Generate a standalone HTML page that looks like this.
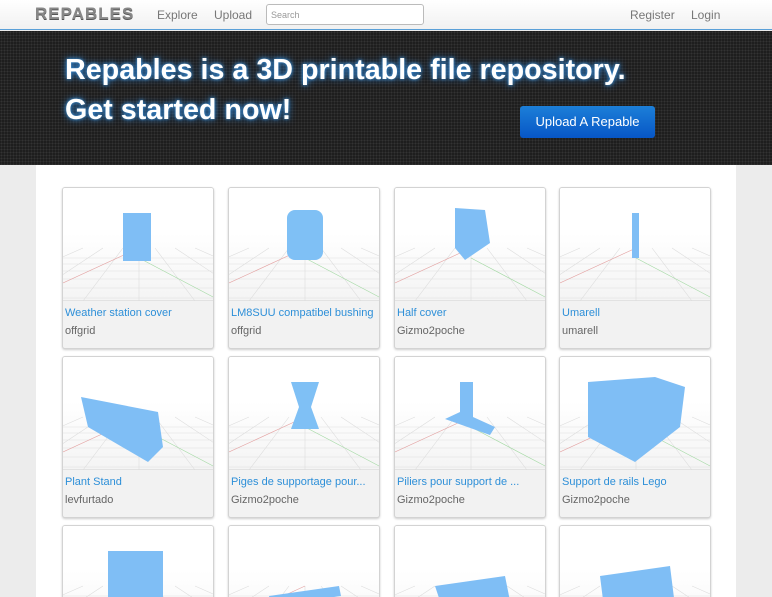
<!DOCTYPE html><html><head><style>
*{margin:0;padding:0;box-sizing:border-box}
html,body{width:772px;height:597px;overflow:hidden}
body{background:#ececec;font-family:"Liberation Sans",sans-serif;position:relative}
.nav{position:absolute;top:0;left:0;width:772px;height:30px;background:linear-gradient(#fff,#f1f1f1);border-bottom:1px solid #5aa0d8}
.nav span{position:absolute;top:8px;font-size:12px;color:#777}
.logo{position:absolute;left:35px;top:4px;font-weight:bold;font-size:17px;letter-spacing:1px;color:#888;text-shadow:0 1px 0 #555}
.search{position:absolute;left:266px;top:4px;width:158px;height:21px;border:1px solid #bbb;border-radius:3px;background:#fff;font-size:9px;color:#999;padding:5px 4px}
.hero{position:absolute;top:31px;left:0;width:772px;height:134px;background:#1e1e1e;background-image:radial-gradient(#333 0.8px,transparent 1px);background-size:3px 3px}
.hero h1{position:absolute;left:65px;color:#fff;font-size:28.7px;font-weight:bold;text-shadow:0 0 8px #2a7fd0,0 0 3px #4a9fe0}
.btn{position:absolute;left:520px;top:75px;width:135px;height:32px;border-radius:3px;background:linear-gradient(#1c7fd8,#0756c6);color:#fff;font-size:13px;text-align:center;line-height:32px}
.cont{position:absolute;left:36px;top:165px;width:700px;height:432px;background:#fff;overflow:hidden}
.card{position:absolute;width:152px;height:162px;border:1px solid #d3d3d3;border-radius:3px;background:#f2f2f2;box-shadow:0 1px 2px #ccc;overflow:hidden}
.img{height:113px;background:linear-gradient(#fff 40%,#f4f4f4);border-bottom:1px solid #e2e2e2;position:relative}
.t{font-size:11px;color:#2d8fd8;margin:6px 0 0 2px;white-space:nowrap}
.a{font-size:11px;color:#666;margin:6px 0 0 2px}
</style></head><body>
<div class="nav"><div class="logo">REPABLES</div><span style="left:157px">Explore</span><span style="left:214px">Upload</span><div class="search">Search</div><span style="left:630px">Register</span><span style="left:691px">Login</span></div>
<div class="hero"><h1 style="top:23px">Repables is a 3D printable file repository.</h1><h1 style="top:63px">Get started now!</h1><div class="btn">Upload A Repable</div></div>
<svg width="0" height="0" style="position:absolute"><defs><g id="g" stroke="#ddd" stroke-width=".6" fill="none"><path d="M0 70L152 70M0 76L152 76M0 83L152 83M0 91L152 91M0 100L152 100M0 110L152 110M40 60L-40 113M60 60L20 113M76 60L76 113M92 60L132 113M112 60L192 113M20 60L-100 113M132 60L252 113"/><path d="M0 95L76 60" stroke="#e3a0a0"/><path d="M76 70L152 110" stroke="#a0d8a0"/></g></defs></svg>
<div class="cont" id="cards"></div>
<script>
var d=[["Weather station cover","offgrid"],["LM8SUU compatibel bushing","offgrid"],["Half cover","Gizmo2poche"],["Umarell","umarell"],["Plant Stand","levfurtado"],["Piges de supportage pour...","Gizmo2poche"],["Piliers pour support de ...","Gizmo2poche"],["Support de rails Lego","Gizmo2poche"],["",""],["",""],["",""],["",""]];
var xs=[26,192,358,523],ys=[22,191,360],h="";
var shapes=['<rect x="60" y="25" width="28" height="48" fill="#7fbef5"/>','<rect x="58" y="22" width="36" height="50" rx="8" fill="#7fc0f5"/>','<path d="M60 20L90 22L95 55L70 72L60 60Z" fill="#7fbef5"/>','<rect x="72" y="25" width="7" height="45" fill="#7fbef5"/>','<path d="M18 40L95 55L100 90L85 105L25 70Z" fill="#7fbef5"/>','<path d="M62 25L90 25L82 50L90 72L62 72L70 50Z" fill="#7fc0f5"/>','<path d="M65 25L78 25L78 60L100 70L95 78L50 62L65 55Z" fill="#7fbef5"/>','<path d="M28 25L95 20L125 30L120 70L75 105L28 80Z" fill="#7fbef5"/>','<rect x="45" y="25" width="55" height="60" fill="#7fbef5"/>','<path d="M40 70L110 60L112 70L42 80Z" fill="#7fbef5"/>','<path d="M40 60L110 50L115 75L50 90Z" fill="#7fbef5"/>','<path d="M40 50L110 40L115 80L45 90Z" fill="#7fbef5"/>'];
d.forEach(function(c,i){h+='<div class="card" style="left:'+xs[i%4]+'px;top:'+ys[Math.floor(i/4)]+'px"><div class="img"><svg width="152" height="113"><use href="#g"/>'+shapes[i]+'</svg></div><div class="t">'+c[0]+'</div><div class="a">'+c[1]+'</div></div>'});
document.getElementById("cards").innerHTML=h;
</script>
</body></html>
